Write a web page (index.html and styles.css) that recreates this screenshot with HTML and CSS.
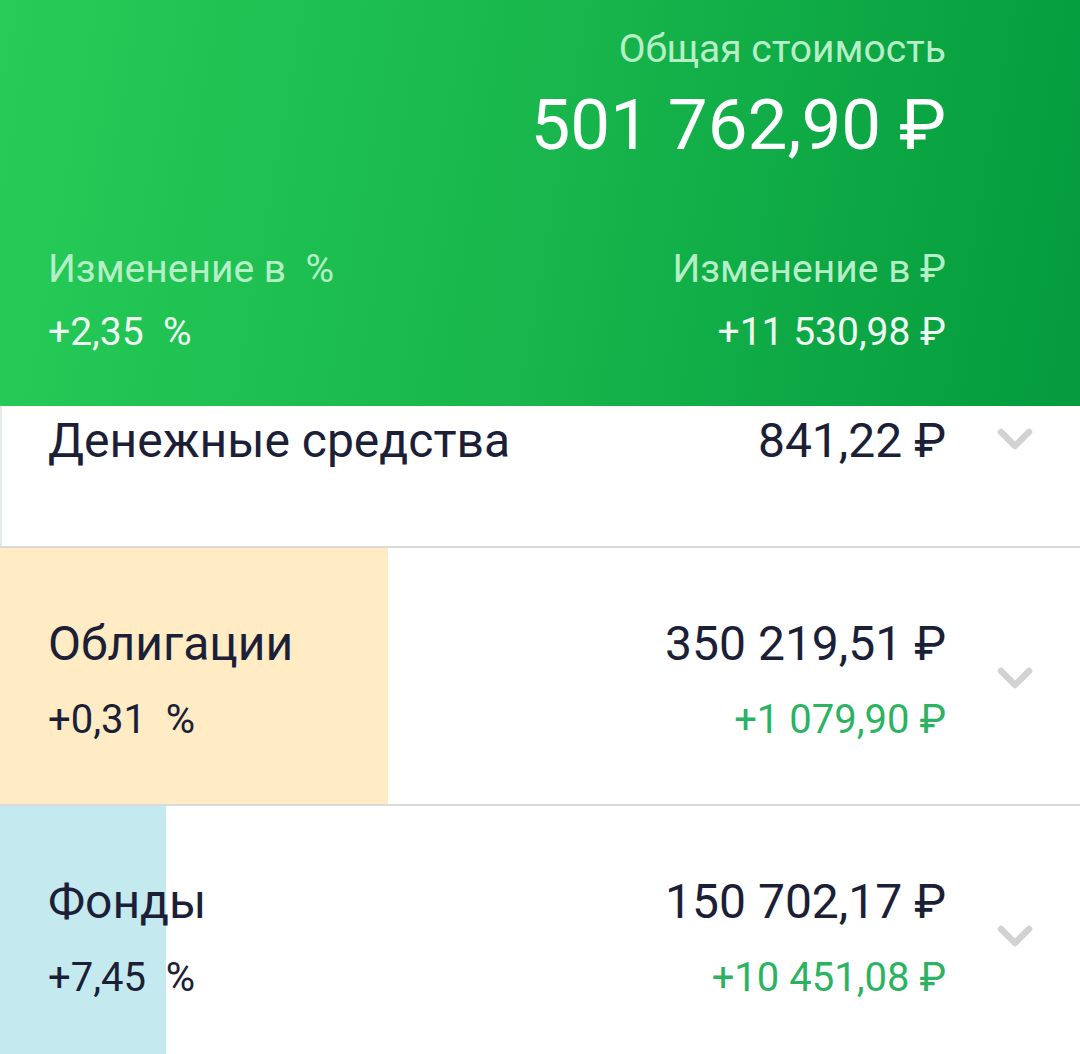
FILE: index.html
```html
<!DOCTYPE html>
<html lang="ru">
<head>
  <meta charset="UTF-8">
  <title>Портфель</title>
  <link rel="stylesheet" href="styles.css">
</head>
<body>

  <!-- шапка с общей стоимостью -->
  <div class="summary">
    <div class="total">
      <div class="total-label">Общая стоимость</div>
      <div class="total-value">501 762,90 ₽</div>
    </div>
    <div class="changes">
      <div class="change">
        <div class="change-label">Изменение в &nbsp;%</div>
        <div class="change-value">+2,35 &nbsp;%</div>
      </div>
      <div class="change change-right">
        <div class="change-label">Изменение в ₽</div>
        <div class="change-value">+11 530,98 ₽</div>
      </div>
    </div>
  </div>

  <!-- список активов -->
  <div class="asset asset-cash">
    <div class="asset-left">
      <div class="asset-name">Денежные средства</div>
    </div>
    <div class="asset-right">
      <div class="asset-sum">841,22 ₽</div>
    </div>
    <div class="asset-toggle">
      <svg width="36" height="24" viewBox="0 0 36 24"><path d="M4 4 L18 18 L32 4" fill="none" stroke="#d2d2d2" stroke-width="6.5" stroke-linecap="round" stroke-linejoin="round"/></svg>
    </div>
  </div>

  <div class="asset">
    <div class="asset-bar bar-bonds" style="width: 388px"></div>
    <div class="asset-left">
      <div class="asset-name">Облигации</div>
      <div class="asset-percent">+0,31 &nbsp;%</div>
    </div>
    <div class="asset-right">
      <div class="asset-sum">350 219,51 ₽</div>
      <div class="asset-profit">+1 079,90 ₽</div>
    </div>
    <div class="asset-toggle">
      <svg width="36" height="24" viewBox="0 0 36 24"><path d="M4 4 L18 18 L32 4" fill="none" stroke="#d2d2d2" stroke-width="6.5" stroke-linecap="round" stroke-linejoin="round"/></svg>
    </div>
  </div>

  <div class="asset">
    <div class="asset-bar bar-funds" style="width: 166px"></div>
    <div class="asset-left">
      <div class="asset-name">Фонды</div>
      <div class="asset-percent">+7,45 &nbsp;%</div>
    </div>
    <div class="asset-right">
      <div class="asset-sum">150 702,17 ₽</div>
      <div class="asset-profit">+10 451,08 ₽</div>
    </div>
    <div class="asset-toggle">
      <svg width="36" height="24" viewBox="0 0 36 24"><path d="M4 4 L18 18 L32 4" fill="none" stroke="#d2d2d2" stroke-width="6.5" stroke-linecap="round" stroke-linejoin="round"/></svg>
    </div>
  </div>

</body>
</html>
```

FILE: styles.css
```css
body {
  margin: 0;
  background-color: #fff;
  font-family: Roboto, 'Noto Sans', 'DejaVu Sans', sans-serif;
  color: #1b2036;
  overflow: hidden;
}
.summary {
  height: 406px;
  box-sizing: border-box;
  padding: 26px 134px 0 48px;
  background: linear-gradient(100deg, #26cc57 0%, #18b64c 50%, #039b3e 100%);
  display: flex;
  flex-direction: column;
}
.total {
  text-align: right;
}
.total-label {
  font-size: 39px;
  line-height: 46px;
  color: #b6efc7;
}
.total-value {
  font-size: 71px;
  line-height: 84px;
  margin-top: 11px;
  color: #fff;
}
.changes {
  display: flex;
  justify-content: space-between;
  margin-top: 79px;
}
.change-right {
  text-align: right;
}
.change-label {
  font-size: 39px;
  line-height: 46px;
  color: #b6efc7;
}
.change-value {
  font-size: 39px;
  line-height: 46px;
  margin-top: 17px;
  color: #eefcf2;
}
.asset {
  position: relative;
  height: 258px;
  box-sizing: border-box;
  padding: 68px 0 0 48px;
  border-top: 2px solid #dadada;
  display: flex;
}
.asset-cash {
  height: 140px;
  padding-top: 7px;
  border-top: none;
  border-left: 2px solid #e4ebe9;
  padding-left: 46px;
}
.asset-bar {
  position: absolute;
  left: 0;
  top: 0;
  bottom: 0;
}
.bar-bonds {
  background-color: #ffebc4;
}
.bar-funds {
  background-color: #c4e9ef;
}
.asset-left, .asset-right {
  position: relative;
}
.asset-left {
  flex: 1;
}
.asset-right {
  text-align: right;
}
.asset-name, .asset-sum {
  font-size: 48px;
  line-height: 56px;
}
.asset-percent, .asset-profit {
  font-size: 40px;
  line-height: 47px;
  margin-top: 24px;
}
.asset-profit {
  color: #2bb363;
}
.asset-toggle {
  width: 134px;
  display: flex;
  justify-content: center;
  align-items: flex-start;
  padding-left: 4px;
  box-sizing: border-box;
  position: relative;
  padding-top: 51px;
}
.asset-cash .asset-toggle {
  padding-top: 15px;
}
```
